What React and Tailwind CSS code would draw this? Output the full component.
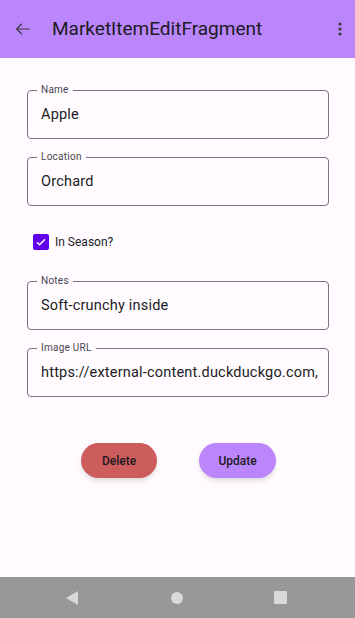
import React from 'react';

function Field({ label, value }) {
  return (
    <div className="relative h-[49px] rounded-[4px] border border-[#79747e] pl-[13px] pr-[8px] flex items-center">
      <span className="absolute -top-[7px] left-[9px] px-[4px] bg-[#fffbfe] text-[10px] leading-[12px] text-[#49454f] tracking-wide">{label}</span>
      <span className="min-w-0 text-[14.5px] text-[#1c1b1f] whitespace-nowrap overflow-hidden tracking-[0.2px]">{value}</span>
    </div>
  );
}

export default function App() {
  return (
    <div className="w-[355px] h-[618px] flex flex-col bg-[#fffbfe] overflow-hidden" style={{ fontFamily: 'Roboto, "Noto Sans", sans-serif' }}>
      {/* App bar */}
      <div className="h-[58px] bg-[#bb86fc] flex items-center shrink-0">
        <div className="w-[46px] flex justify-center">
          <svg width="18" height="18" viewBox="0 0 24 24" fill="none" stroke="#3a3a3a" strokeWidth="1.6">
            <path d="M21 12H3.5M10.5 5l-7 7 7 7" />
          </svg>
        </div>
        <span className="ml-[6px] text-[19px] text-[#1c1b1f] flex-1">MarketItemEditFragment</span>
        <div className="w-[30px] flex justify-center">
          <svg width="4" height="14" viewBox="0 0 4 14" fill="#3a3a3a">
            <circle cx="2" cy="2" r="1.6" />
            <circle cx="2" cy="7" r="1.6" />
            <circle cx="2" cy="12" r="1.6" />
          </svg>
        </div>
      </div>

      {/* Form */}
      <div className="flex-1 flex flex-col pl-[27px] pr-[26px] pt-[32px]">
        <Field label="Name" value="Apple" />
        <div className="mt-[18px]"><Field label="Location" value="Orchard" /></div>
        <div className="flex items-center mt-[28px] ml-[6px] h-[16px]">
          <div className="w-[16px] h-[16px] rounded-[2px] bg-[#6200ee] flex items-center justify-center">
            <svg width="12" height="12" viewBox="0 0 24 24" fill="none" stroke="white" strokeWidth="3">
              <path d="M4 12.5l5 5L20 6.5" />
            </svg>
          </div>
          <span className="ml-[6px] text-[12px] text-[#1c1b1f]">In Season?</span>
        </div>
        <div className="mt-[31px]"><Field label="Notes" value="Soft-crunchy inside" /></div>
        <div className="mt-[18px]"><Field label="Image URL" value="https://external-content.duckduckgo.com," /></div>

        <div className="flex mt-[46px]">
          <button className="ml-[54px] w-[76px] h-[35px] rounded-full bg-[#cd5c5c] text-[12px] font-medium text-[#1c1b1f] shadow-md">Delete</button>
          <button className="ml-[42px] w-[77px] h-[35px] rounded-full bg-[#bb86fc] text-[12px] font-medium text-[#1c1b1f] shadow-md">Update</button>
        </div>
      </div>

      {/* Nav bar */}
      <div className="h-[41px] bg-[#999797] flex items-center shrink-0">
        <div className="w-[148px] flex justify-end pr-[69px]">
          <svg width="13" height="14" viewBox="0 0 13 14" fill="#d9d9d9"><path d="M0 7L12 0v14z" /></svg>
        </div>
        <div className="w-[60px] flex justify-center -ml-[1px]">
          <div className="w-[12px] h-[12px] rounded-full bg-[#d9d9d9]" />
        </div>
        <div className="flex-1 flex justify-start pl-[67px]">
          <div className="w-[13px] h-[13px] rounded-[1px] bg-[#d9d9d9]" />
        </div>
      </div>
    </div>
  );
}
